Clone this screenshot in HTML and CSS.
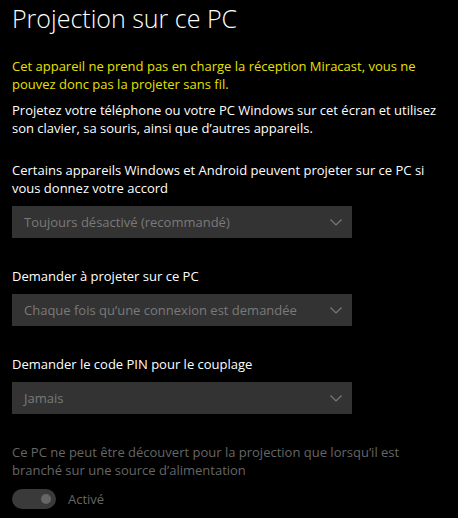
FILE: index.html
```html
<!DOCTYPE html>
<html lang="fr">
<head>
    <meta charset="UTF-8">
    <meta name="viewport" content="width=device-width, initial-scale=1.0">
    <title>Projection sur ce PC</title>
    <link rel="stylesheet" href="styles.css">
</head>
<body>
    <div class="page">
        <h1 class="titre">Projection sur ce PC</h1>

        <p class="alerte">Cet appareil ne prend pas en charge la réception Miracast, vous ne pouvez donc pas la projeter sans fil.</p>
        <p class="intro">Projetez votre téléphone ou votre PC Windows sur cet écran et utilisez son clavier, sa souris, ainsi que d’autres appareils.</p>

        <div class="reglage">
            <div class="label">Certains appareils Windows et Android peuvent projeter sur ce PC si vous donnez votre accord</div>
            <div class="select">
                <span>Toujours désactivé (recommandé)</span>
                <svg class="chevron" width="12" height="7" viewBox="0 0 12 7"><path d="M0.5 0.5 L6 6 L11.5 0.5" fill="none" stroke="#7a7a7a" stroke-width="1.2"/></svg>
            </div>
        </div>

        <div class="reglage">
            <div class="label">Demander à projeter sur ce PC</div>
            <div class="select">
                <span>Chaque fois qu’une connexion est demandée</span>
                <svg class="chevron" width="12" height="7" viewBox="0 0 12 7"><path d="M0.5 0.5 L6 6 L11.5 0.5" fill="none" stroke="#7a7a7a" stroke-width="1.2"/></svg>
            </div>
        </div>

        <div class="reglage">
            <div class="label">Demander le code PIN pour le couplage</div>
            <div class="select">
                <span>Jamais</span>
                <svg class="chevron" width="12" height="7" viewBox="0 0 12 7"><path d="M0.5 0.5 L6 6 L11.5 0.5" fill="none" stroke="#7a7a7a" stroke-width="1.2"/></svg>
            </div>
        </div>

        <div class="reglage">
            <div class="label desactive">Ce PC ne peut être découvert pour la projection que lorsqu’il est branché sur une source d’alimentation</div>
            <div class="interrupteur">
                <div class="piste"><div class="bouton"></div></div>
                <span>Activé</span>
            </div>
        </div>
    </div>
</body>
</html>
```

FILE: styles.css
```css
body {
    margin: 0;
    background-color: #000;
    color: #fff;
    font-family: "Open Sans", "Noto Sans", sans-serif;
    font-size: 13px;
    line-height: 18px;
}

.page {
    display: flex;
    flex-direction: column;
    padding: 0 6px 0 12px;
    width: 440px;
}

.titre {
    margin: 0;
    font-weight: 300;
    font-size: 25px;
    line-height: 36px;
}

.alerte {
    margin: 21px 0 0;
    color: #e6e000;
}

.intro {
    margin: 8px 0 0;
}

.reglage {
    display: flex;
    flex-direction: column;
    margin-top: 29px;
}

.intro + .reglage {
    margin-top: 24px;
}

.label {
    margin-bottom: 9px;
}

.label.desactive {
    color: #666;
    margin-bottom: 10px;
}

.select {
    display: flex;
    align-items: center;
    justify-content: space-between;
    width: 340px;
    height: 32px;
    padding: 0 10px 0 12px;
    box-sizing: border-box;
    background-color: #333;
    color: #7a7a7a;
}

.interrupteur {
    display: flex;
    align-items: center;
    gap: 12px;
    color: #666;
}

.piste {
    display: flex;
    align-items: center;
    justify-content: flex-end;
    width: 44px;
    height: 20px;
    padding: 0 5px;
    box-sizing: border-box;
    border-radius: 10px;
    background-color: #3a3a3a;
}

.bouton {
    width: 10px;
    height: 10px;
    border-radius: 50%;
    background-color: #666;
}
```
